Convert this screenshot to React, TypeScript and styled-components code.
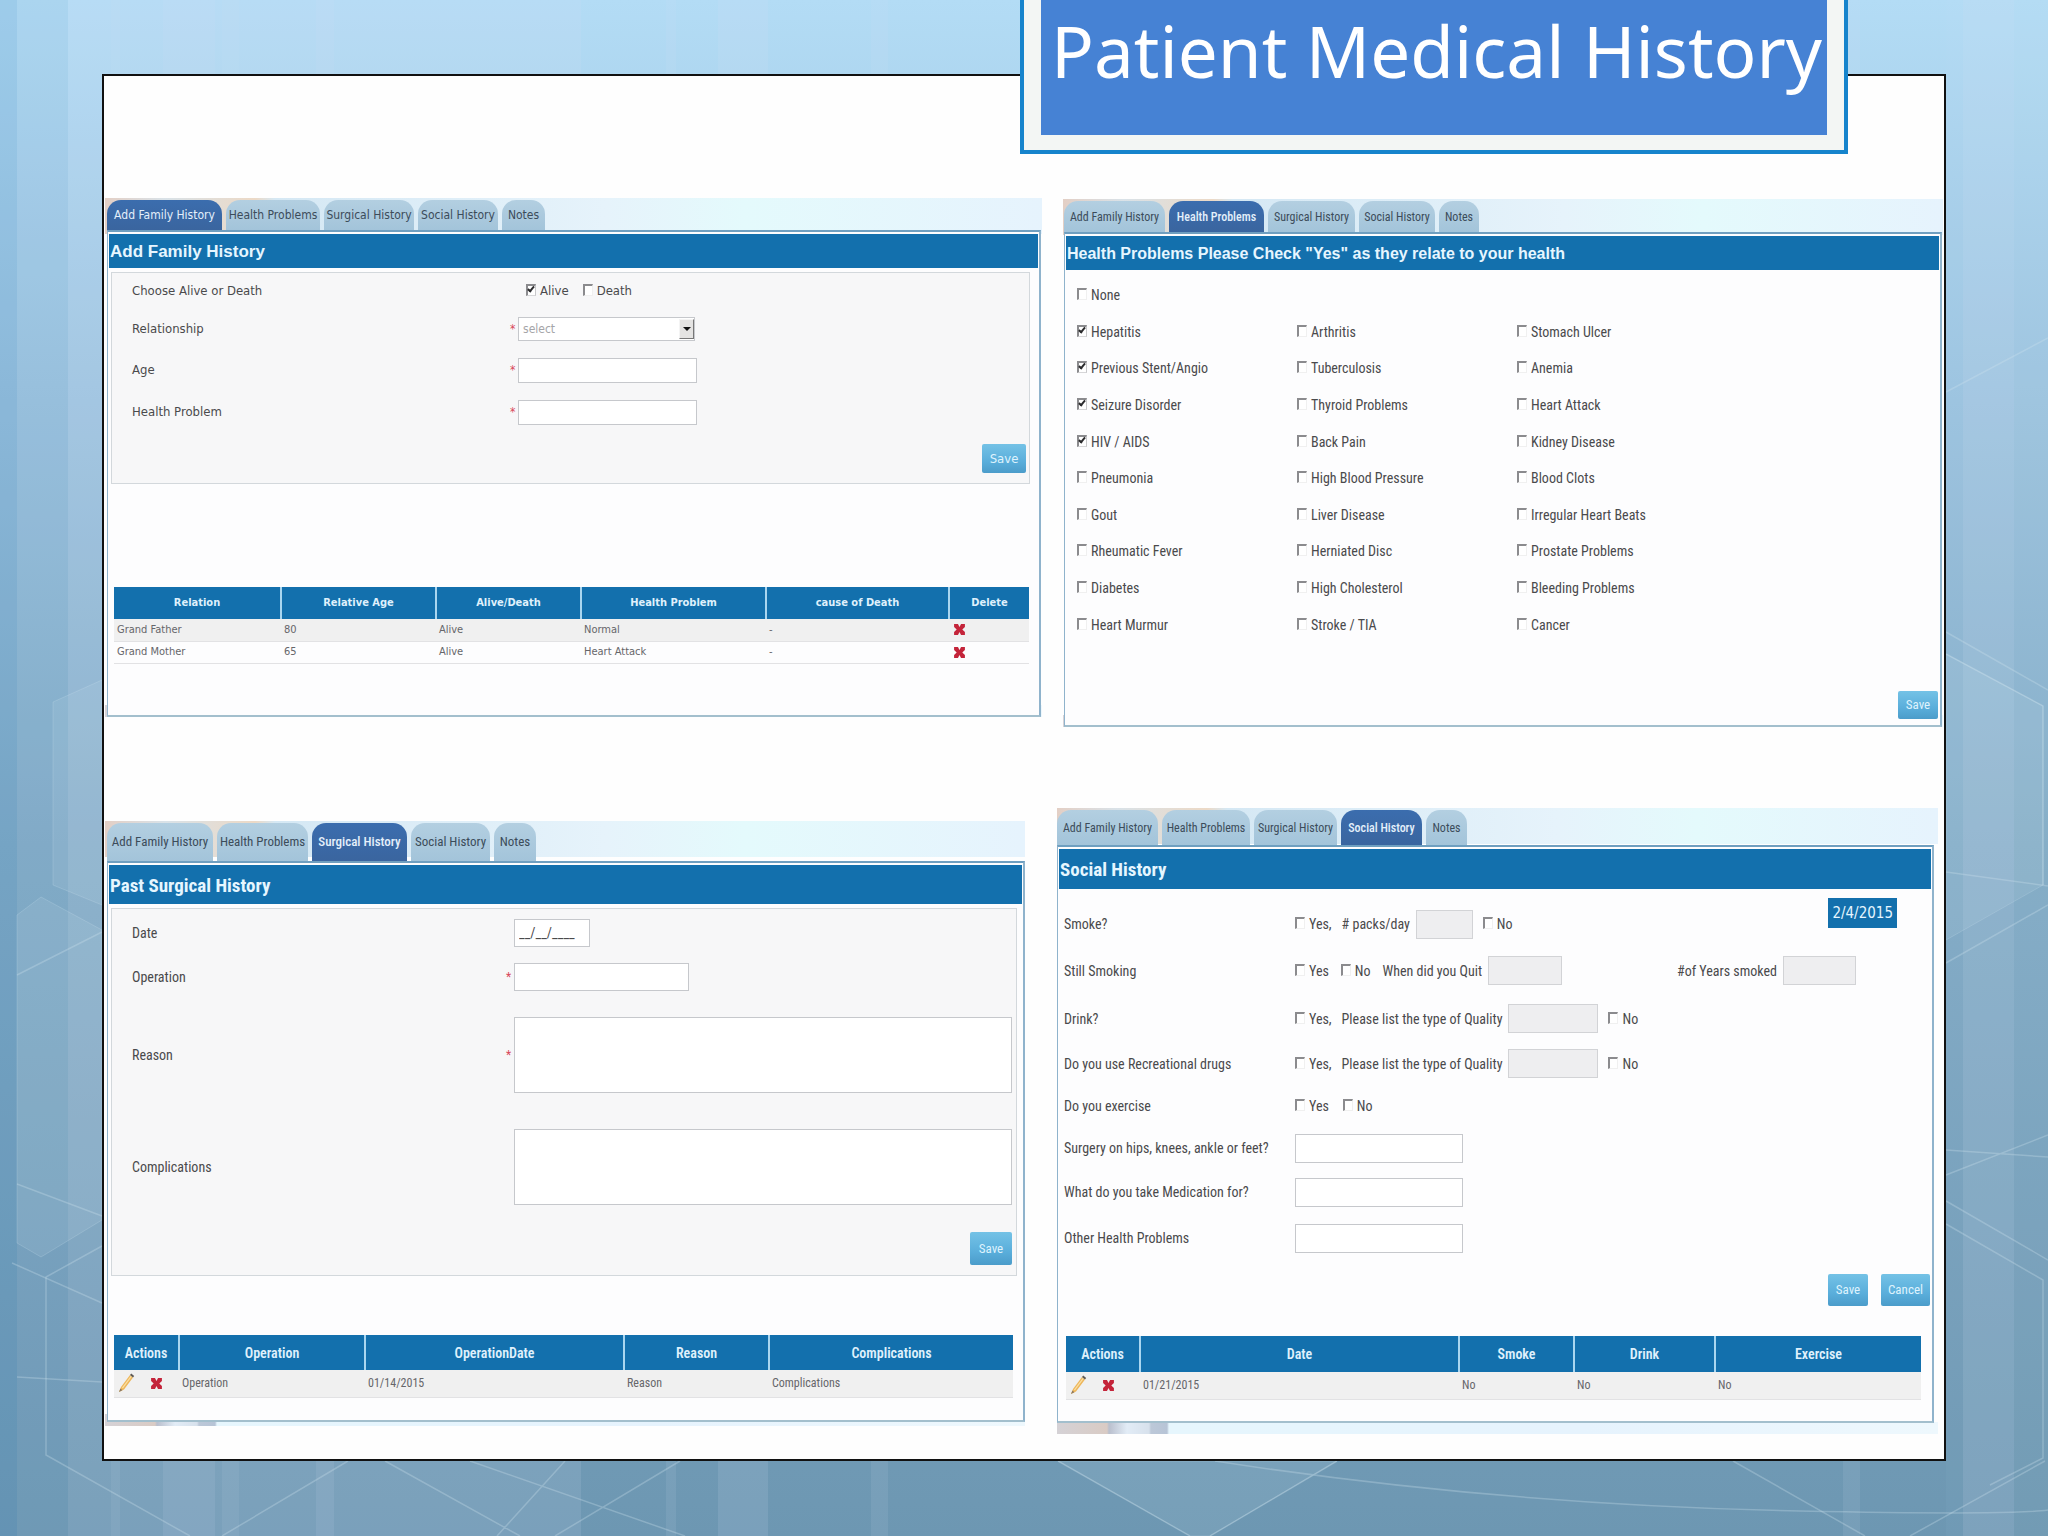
import React, { useId, useState } from "react";
import styled, { createGlobalStyle, css } from "styled-components";

const TAHOMA = '"DejaVu Sans Condensed", "Liberation Sans", sans-serif';
const NARROW = '"Roboto Condensed", "Liberation Sans", sans-serif';
const ARIAL = '"Liberation Sans", Arial, sans-serif';
const HEADING = '"Noto Sans", "Open Sans", sans-serif';

const Global = createGlobalStyle`
  *, *::before, *::after { box-sizing: border-box; }
  body { margin: 0; background: #6b95b3; }
  button, input, select, textarea { font: inherit; color: inherit; margin: 0; }
`;

/* ---------- slide ---------- */

const Slide = styled.main`
  position: relative;
  isolation: isolate;
  min-height: 100vh;
  padding: 74px 102px 75px;
  display: flex;
  flex-direction: column;
`;

const Backdrop = styled.svg`
  position: absolute;
  inset: 0;
  width: 100%;
  height: 100%;
  z-index: -1;
`;

const Sheet = styled.section`
  flex: 1;
  padding: 122px 1px 24px;
  border: 2px solid #111;
  background: #fefefe;
`;

const TitleFrame = styled.header`
  position: absolute;
  top: 0;
  right: 200px;
  padding: 0 17px 15px;
  border: 4px solid #1684cc;
  border-top: 0;
  background: #f3f6f4;
`;

const Title = styled.h1`
  margin: 0;
  padding: 0 5px 33px 10px;
  background: #4682d4;
  color: #fff;
  font: 400 71px/102px ${HEADING};
  white-space: nowrap;
`;

const PanelRow = styled.div<{ $cols: string; $gap: number; $end?: number }>`
  display: grid;
  grid-template-columns: ${(p) => p.$cols};
  column-gap: ${(p) => p.$gap}px;
  align-items: start;
  padding-right: ${(p) => p.$end || 0}px;
  & + & { margin-top: 81px; }
`;

/* ---------- panel ---------- */

const Panel = styled.article<{ $font: string; $size: number; $top?: number; $inset?: string; $foot?: number }>`
  margin-top: ${(p) => p.$top || 0}px;
  padding: ${(p) => p.$inset || "0 1px 0 2px"};
  padding-bottom: ${(p) => p.$foot || 0}px;
  font-family: ${(p) => p.$font};
  font-size: ${(p) => p.$size}px;
  line-height: 18px;
  color: #4a4a4c;
  background:
    linear-gradient(90deg, #d5d2d6 0, #d9cbc4 50px, #b9bfcd 52px, #e2ecf6 70px, #d7e1ec 92px, #bcc8d8 94px, #b7c4d6 110px, #e6f6fd 112px, #e6f3fd 60%, #eef8fd) bottom / 100% 12px no-repeat,
    linear-gradient(90deg, #e3cfc5 0, #d9e2e8 60px, #ecd9c6 150px, #d5e8f4 170px, #e6f3fb 500px, #e4fafc 640px, #e6f3fd) top / 100% 36px no-repeat;
`;

const TabBar = styled.nav<{ $cols: string; $height: number; $lead: number }>`
  display: grid;
  grid-template-columns: ${(p) => p.$cols};
  column-gap: 4px;
  height: ${(p) => p.$height}px;
  padding: 2px 0 0 ${(p) => p.$lead}px;
`;

const Tab = styled.button<{ $on: boolean; $size: number }>`
  padding: 0;
  border: 0;
  border-radius: 14px 14px 0 0;
  background: ${(p) => (p.$on ? "linear-gradient(#3b6dae, #3a659f)" : "linear-gradient(#b3cfe1, #a3c4da)")};
  color: ${(p) => (p.$on ? "#e4f0fb" : "#3c4c5a")};
  font-size: ${(p) => p.$size}px;
  font-weight: ${(p) => (p.$on ? 500 : 400)};
  white-space: nowrap;
  cursor: pointer;
`;

const Body = styled.div<{ $bottom: number }>`
  position: relative;
  padding: 2px 1px ${(p) => p.$bottom}px;
  border: 1px solid #8fb3cc;
  border-width: 2px 2px 2px 1px;
  border-top-color: #6f9fc0;
  border-bottom-color: #a3bfcd;
  background: #fdfdfe;
`;

const Band = styled.h2<{ $height: number; $font: string; $size: number }>`
  display: flex;
  align-items: center;
  height: ${(p) => p.$height}px;
  margin: 0;
  padding: 2px 0 0 1px;
  background: #1370ad;
  color: #e6f6ff;
  font: 700 ${(p) => p.$size}px/24px ${(p) => p.$font};
  white-space: nowrap;
`;

const Form = styled.form<{ $right: number; $label: number }>`
  --label: ${(p) => p.$label}px;
  margin: 4px ${(p) => p.$right}px 0 2px;
  padding-bottom: 10px;
  border: 1px solid #d3d8dc;
  background: #f7f7f8;
`;

const Field = styled.div<{ $height: number }>`
  display: grid;
  grid-template-columns: var(--label) 8px 1fr;
  align-items: center;
  min-height: ${(p) => p.$height}px;
  padding-right: 4px;
`;

const FieldLabel = styled.label`
  padding-left: 20px;
`;

const Star = styled.span`
  color: #d8475a;
  font-size: 12px;
`;

const boxed = css`
  border: 1px solid #c6c8cc;
  border-radius: 0;
  background: #fff;
  padding: 0 4px;
  outline: none;
`;

const TextBox = styled.input<{ $w: number; $h: number }>`
  ${boxed}
  width: ${(p) => p.$w}px;
  height: ${(p) => p.$h}px;
  &:disabled { background: #eeeef0; border-color: #d2d3d6; }
`;

const Area = styled.textarea`
  ${boxed}
  display: block;
  width: 100%;
  height: 76px;
  resize: none;
`;

const SelectWrap = styled.span`
  position: relative;
  display: inline-block;
  width: 177px;
`;

const Select = styled.select`
  ${boxed}
  appearance: none;
  display: block;
  width: 100%;
  height: 24px;
  color: #a5a5a8;
  font-size: 12px;
`;

const SelectArrow = styled.span`
  position: absolute;
  top: 2px;
  right: 1px;
  width: 15px;
  height: 20px;
  display: grid;
  place-items: center;
  background: #e4e3e2;
  border: 1px solid #f4f4f4;
  border-right-color: #777;
  border-bottom-color: #777;
  pointer-events: none;
  &::after {
    content: "";
    border: 4px solid transparent;
    border-bottom: 0;
    border-top-color: #111;
  }
`;

const CheckLabel = styled.label`
  display: inline-flex;
  align-items: center;
  gap: 4px;
  white-space: nowrap;
`;

const Tick = styled.input`
  appearance: none;
  position: relative;
  width: 10px;
  height: 12px;
  margin-bottom: 2px;
  border: 1px solid #f0f0f0;
  border-top: 2px solid #8b8b8e;
  border-left: 2px solid #8b8b8e;
  background: #fff;
  &:checked { border-color: #8b8b8e #c8c8ca #d6d6d8 #8b8b8e; }
  &:checked::after {
    content: "";
    position: absolute;
    left: 1px;
    top: -1px;
    width: 4px;
    height: 7px;
    border: solid #2b2b2d;
    border-width: 0 2px 2px 0;
    transform: rotate(40deg);
  }
`;

const Inline = styled.div<{ $gap?: number; $lead?: number }>`
  display: flex;
  align-items: center;
  gap: ${(p) => p.$gap ?? 14}px;
  padding-left: ${(p) => p.$lead || 0}px;
  white-space: nowrap;
`;

const Actions = styled.div<{ $top: number; $right: number; $gap?: number }>`
  display: flex;
  justify-content: flex-end;
  gap: ${(p) => p.$gap || 0}px;
  padding: ${(p) => p.$top}px ${(p) => p.$right}px 0 0;
`;

const Push = styled.button<{ $w: number; $h: number }>`
  width: ${(p) => p.$w}px;
  height: ${(p) => p.$h}px;
  padding: 0;
  border: 0;
  border-radius: 2px;
  background: linear-gradient(#74c2e6, #5aaedb 60%, #4b9cca);
  color: #dff3fd;
  font-size: 13px;
  cursor: pointer;
`;

/* ---------- tables ---------- */

const Table = styled.table<{ $left: number; $right: number; $head: number; $row: number; $size: number; $th: number }>`
  width: calc(100% - ${(p) => p.$left + p.$right}px);
  margin: 0 ${(p) => p.$right}px 0 ${(p) => p.$left}px;
  table-layout: fixed;
  border-collapse: collapse;
  th {
    height: ${(p) => p.$head}px;
    padding: 0;
    background: #1370ad;
    color: #dff0fc;
    font-size: ${(p) => p.$th}px;
    font-weight: 600;
    text-align: center;
  }
  th + th { border-left: 2px solid #a9d6f0; }
  td {
    height: ${(p) => p.$row}px;
    padding: 0 3px;
    border-bottom: 1px solid #e2e2e4;
    font-size: ${(p) => p.$size}px;
    color: #66666a;
    white-space: nowrap;
  }
  tbody tr:nth-child(odd) td { background: #f0f0f0; }
`;

const Col = styled.col<{ $w: number }>`
  width: ${(p) => p.$w}px;
`;

const Spacer = styled.div<{ $h: number }>`
  height: ${(p) => p.$h}px;
`;

const IconButton = styled.button`
  display: inline-flex;
  vertical-align: middle;
  padding: 0 0 0 1px;
  border: 0;
  background: none;
  cursor: pointer;
`;

const CrossIcon = () => (
  <svg width="13" height="13" viewBox="0 0 12 13" preserveAspectRatio="none" aria-hidden="true">
    <path d="M1 1h3.6L6 4 7.4 1H11v3L8.6 6.5 11 9v3H7.4L6 9l-1.4 3H1V9l2.4-2.5L1 4z" fill="#c4243a" />
  </svg>
);

const PencilIcon = () => (
  <svg width="17" height="20" viewBox="0 0 17 20" aria-hidden="true">
    <path d="M1 19l2-5L12 2l3 2.4L6 16.4z" fill="#edb65a" />
    <path d="M4.4 15.2L13.4 3.2" stroke="#fae0a6" strokeWidth="1.2" />
    <path d="M12 2l1.2-1.4 3 2.4L15 4.4z" fill="#5f5a55" />
    <path d="M1 19l1.4-3.4 2 1.7z" fill="#8d7a63" />
  </svg>
);

const Delete = () => <IconButton type="button" aria-label="Delete"><CrossIcon /></IconButton>;

const RowActions = () => (
  <Inline $gap={14}>
    <IconButton type="button" aria-label="Edit"><PencilIcon /></IconButton>
    <Delete />
  </Inline>
);

const Grid = ({ cols, head, rows, ...rest }: {
  cols: number[]; head: string[]; rows: React.ReactNode[][];
  $left: number; $right: number; $head: number; $row: number; $size: number; $th: number;
}) => (
  <Table {...rest}>
    <colgroup>{cols.map((w, i) => <Col key={i} $w={w} />)}</colgroup>
    <thead><tr>{head.map((h) => <th key={h} scope="col">{h}</th>)}</tr></thead>
    <tbody>{rows.map((r, i) => <tr key={i}>{r.map((c, j) => <td key={j}>{c}</td>)}</tr>)}</tbody>
  </Table>
);

const TABS = ["Add Family History", "Health Problems", "Surgical History", "Social History", "Notes"];

const Tabs = ({ on, size, ...rest }: { on: number; size: number; $cols: string; $height: number; $lead: number }) => (
  <TabBar {...rest}>
    {TABS.map((t, i) => <Tab key={t} type="button" $on={i === on} $size={size}>{t}</Tab>)}
  </TabBar>
);

const Check = ({ label, on = false }: { label: string; on?: boolean }) => {
  const [v, setV] = useState(on);
  return <CheckLabel><Tick type="checkbox" checked={v} onChange={() => setV(!v)} />{label}</CheckLabel>;
};

/* ---------- family history ---------- */

const Family = () => {
  const id = useId();
  return (
    <Panel $font={TAHOMA} $size={13}>
      <Tabs on={0} size={12} $cols="115px 94px 90px 80px 43px" $height={32} $lead={0} />
      <Body $bottom={51}>
        <Band $height={34} $font={ARIAL} $size={17}>Add Family History</Band>
        <Form $right={8} $label={398}>
          <Field $height={35}>
            <FieldLabel as="span">Choose Alive or Death</FieldLabel><span />
            <Inline $lead={8}><Check label="Alive" on /><Check label="Death" /></Inline>
          </Field>
          <Field $height={41}>
            <FieldLabel htmlFor={id + "r"}>Relationship</FieldLabel><Star>*</Star>
            <SelectWrap>
              <Select id={id + "r"} defaultValue="select"><option>select</option></Select>
              <SelectArrow />
            </SelectWrap>
          </Field>
          <Field $height={42}>
            <FieldLabel htmlFor={id + "a"}>Age</FieldLabel><Star>*</Star>
            <TextBox id={id + "a"} $w={179} $h={25} />
          </Field>
          <Field $height={42}>
            <FieldLabel htmlFor={id + "h"}>Health Problem</FieldLabel><Star>*</Star>
            <TextBox id={id + "h"} $w={179} $h={25} />
          </Field>
          <Actions $top={11} $right={3}><Push type="button" $w={44} $h={29}>Save</Push></Actions>
        </Form>
        <Spacer $h={103} />
        <Grid
          $left={5} $right={9} $head={32} $row={22} $size={11} $th={11}
          cols={[167, 155, 145, 185, 183, 80]}
          head={["Relation", "Relative Age", "Alive/Death", "Health Problem", "cause of Death", "Delete"]}
          rows={[
            ["Grand Father", "80", "Alive", "Normal", "-", <Delete />],
            ["Grand Mother", "65", "Alive", "Heart Attack", "-", <Delete />],
          ]}
        />
      </Body>
    </Panel>
  );
};

/* ---------- health problems ---------- */

const Problems = styled.div`
  display: grid;
  grid-template-columns: repeat(3, 220px);
  grid-template-rows: repeat(10, 1fr);
  align-items: center;
  height: 373px;
  padding: 7px 0 0 11px;
`;

const PROBLEMS: [string, boolean?][] = [
  ["Hepatitis", true], ["Arthritis"], ["Stomach Ulcer"],
  ["Previous Stent/Angio", true], ["Tuberculosis"], ["Anemia"],
  ["Seizure Disorder", true], ["Thyroid Problems"], ["Heart Attack"],
  ["HIV / AIDS", true], ["Back Pain"], ["Kidney Disease"],
  ["Pneumonia"], ["High Blood Pressure"], ["Blood Clots"],
  ["Gout"], ["Liver Disease"], ["Irregular Heart Beats"],
  ["Rheumatic Fever"], ["Herniated Disc"], ["Prostate Problems"],
  ["Diabetes"], ["High Cholesterol"], ["Bleeding Problems"],
  ["Heart Murmur"], ["Stroke / TIA"], ["Cancer"],
];

const FirstCell = styled.div`
  grid-column: 1 / -1;
`;

const Health = () => (
  <Panel $font={NARROW} $size={14} $top={1} $inset="0 1px 0 1px">
    <Tabs on={1} size={12} $cols="101px 95px 87px 76px 40px" $height={33} $lead={0} />
    <Body $bottom={6}>
      <Band $height={34} $font={ARIAL} $size={16}>Health Problems Please Check "Yes" as they relate to your health</Band>
      <Problems>
        <FirstCell><Check label="None" /></FirstCell>
        {PROBLEMS.map(([name, on]) => <Check key={name} label={name} on={on} />)}
      </Problems>
      <Actions $top={48} $right={1}><Push type="button" $w={40} $h={28}>Save</Push></Actions>
    </Body>
  </Panel>
);

/* ---------- surgical history ---------- */

const Surgical = () => {
  const id = useId();
  return (
    <Panel $font={NARROW} $size={14} $top={13} $inset="0 0 0 2px" $foot={4}>
      <Tabs on={2} size={13} $cols="106px 91px 95px 79px 42px" $height={40} $lead={0} />
      <Body $bottom={22}>
        <Band $height={39} $font={NARROW} $size={19}>Past Surgical History</Band>
        <Form $right={5} $label={394}>
          <Field $height={47}>
            <FieldLabel htmlFor={id + "d"}>Date</FieldLabel><span />
            <TextBox id={id + "d"} $w={76} $h={28} defaultValue="__/__/____" />
          </Field>
          <Field $height={42}>
            <FieldLabel htmlFor={id + "o"}>Operation</FieldLabel><Star>*</Star>
            <TextBox id={id + "o"} $w={175} $h={28} />
          </Field>
          <Field $height={114}>
            <FieldLabel htmlFor={id + "r"}>Reason</FieldLabel><Star>*</Star>
            <Area id={id + "r"} />
          </Field>
          <Field $height={110}>
            <FieldLabel htmlFor={id + "c"}>Complications</FieldLabel><span />
            <Area id={id + "c"} />
          </Field>
          <Actions $top={10} $right={4}><Push type="button" $w={42} $h={33}>Save</Push></Actions>
        </Form>
        <Spacer $h={59} />
        <Grid
          $left={5} $right={9} $head={35} $row={27} $size={12} $th={14}
          cols={[65, 186, 259, 145, 244]}
          head={["Actions", "Operation", "OperationDate", "Reason", "Complications"]}
          rows={[[<RowActions />, "Operation", "01/14/2015", "Reason", "Complications"]]}
        />
      </Body>
    </Panel>
  );
};

/* ---------- social history ---------- */

const DateBadge = styled.time`
  position: absolute;
  top: 51px;
  right: 35px;
  padding: 6px 4px;
  background: #1370ad;
  color: #e6f6ff;
  font: 400 15px/18px ${TAHOMA};
`;

const Questions = styled.form`
  padding: 13px 0 0 5px;
`;

const Question = styled.div<{ $height: number }>`
  display: grid;
  grid-template-columns: 231px 1fr;
  align-items: center;
  min-height: ${(p) => p.$height}px;
`;

const Beside = styled.label`
  display: inline-flex;
  align-items: center;
  gap: 6px;
`;

const Apart = styled(Beside)`
  margin-left: auto;
  padding-right: 75px;
`;

const QUALITY = "Please list the type of Quality";

const Quality = ({ label, height }: { label: string; height: number }) => (
  <Question $height={height}>
    <span>{label}</span>
    <Inline $gap={10}>
      <Check label="Yes," />
      <Beside>{QUALITY}<TextBox disabled $w={90} $h={29} /></Beside>
      <Check label="No" />
    </Inline>
  </Question>
);

const Open = ({ label, height }: { label: string; height: number }) => {
  const id = useId();
  return (
    <Question $height={height}>
      <label htmlFor={id}>{label}</label>
      <TextBox id={id} $w={168} $h={29} />
    </Question>
  );
};

const Social = () => (
  <Panel $font={NARROW} $size={14} $inset="0 4px 0 0" $foot={11}>
    <Tabs on={3} size={12} $cols="101px 88px 83px 81px 41px" $height={37} $lead={0} />
    <Body $bottom={21}>
      <Band $height={40} $font={NARROW} $size={19}>Social History</Band>
      <DateBadge>2/4/2015</DateBadge>
      <Questions>
        <Question $height={44}>
          <span>Smoke?</span>
          <Inline $gap={10}>
            <Check label="Yes," />
            <Beside># packs/day<TextBox disabled $w={57} $h={29} /></Beside>
            <Check label="No" />
          </Inline>
        </Question>
        <Question $height={49}>
          <span>Still Smoking</span>
          <Inline $gap={12}>
            <Check label="Yes" />
            <Check label="No" />
            <Beside>When did you Quit<TextBox disabled $w={74} $h={29} /></Beside>
            <Apart>#of Years smoked<TextBox disabled $w={73} $h={29} /></Apart>
          </Inline>
        </Question>
        <Quality label="Drink?" height={47} />
        <Quality label="Do you use Recreational drugs" height={43} />
        <Question $height={42}>
          <span>Do you exercise</span>
          <Inline $gap={14}><Check label="Yes" /><Check label="No" /></Inline>
        </Question>
        <Open label="Surgery on hips, knees, ankle or feet?" height={42} />
        <Open label="What do you take Medication for?" height={46} />
        <Open label="Other Health Problems" height={46} />
        <Actions $top={13} $right={1} $gap={13}>
          <Push type="button" $w={40} $h={32}>Save</Push>
          <Push type="button" $w={49} $h={32}>Cancel</Push>
        </Actions>
      </Questions>
      <Spacer $h={30} />
      <Grid
        $left={7} $right={10} $head={36} $row={27} $size={12} $th={14}
        cols={[74, 319, 115, 141, 206]}
        head={["Actions", "Date", "Smoke", "Drink", "Exercise"]}
        rows={[[<RowActions />, "01/21/2015", "No", "No", "No"]]}
      />
    </Body>
  </Panel>
);

/* ---------- backdrop ---------- */

const BANDS: [number, number, number][] = [
  [17, 51, 0.06], [68, 513, 0.13], [111, 9, 0.08], [163, 52, 0.1], [222, 17, 0.08], [316, 18, 0.1],
  [666, 10, 0.1], [718, 50, 0.13], [871, 17, 0.1], [1843, 17, 0.1], [1946, 17, 0.04], [1963, 51, 0.16], [2014, 34, 0.05],
];

const LINES = [
  "M102 932L17 975M17 1184L102 1216M12 1263L102 1303M17 1377L102 1382",
  "M102 1246L46 1277V1455L190 1536",
  "M348 1461L222 1536M385 1461L520 1536M470 1461L685 1536M565 1461L497 1536M680 1461L555 1536",
  "M1058 1461L1190 1536M1337 1461L1210 1536M1215 1461Q1500 1505 1800 1511T2048 1504",
  "M1733 1461L1865 1536M2045 1461L1910 1536",
  "M1946 392L2048 338M1946 632L2048 690M1946 872L2048 886M1946 963L2048 905",
  "M1946 1150L2048 1157M1946 1175L2048 1135M1946 1201L2048 1260M1946 1224L2043 1280V1458L1990 1485",
  "M1946 654L2043 706V885",
];

const Scene = () => (
  <Backdrop viewBox="0 0 2048 1536" preserveAspectRatio="none" aria-hidden="true">
    <defs>
      <linearGradient id="sky" x1="0" y1="0" x2="0" y2="1">
        <stop offset="0" stopColor="#b3dcf5" />
        <stop offset="0.25" stopColor="#9dc4e0" />
        <stop offset="0.55" stopColor="#82abc6" />
        <stop offset="1" stopColor="#6d97b2" />
      </linearGradient>
    </defs>
    <rect width="2048" height="1536" fill="url(#sky)" />
    {BANDS.map(([x, w, o]) => <rect key={x} x={x} width={w} height="1536" fill="#d5e2f5" opacity={o} />)}
    <rect width="17" height="1536" fill="#3f86bb" opacity="0.18" />
    <rect x="17" width="51" height="1536" fill="#3f86bb" opacity="0.08" />
    <g fill="#dbe8f5" fillOpacity="0.1" stroke="#d9ecf5" strokeOpacity="0.2">
      <path d="M102 680L53 702V885L102 905z" />
      <path d="M17 915L41 897L102 930V1220L41 1257L17 1243z" />
      <path d="M1058 1461L1190 1536H1210L1337 1461z" />
      <path d="M1946 654L2043 706V885L1946 940z" />
    </g>
    <g fill="none" stroke="#cfe5f0" strokeOpacity="0.3" strokeWidth="1.5">
      {LINES.map((d) => <path key={d} d={d} />)}
    </g>
  </Backdrop>
);

export default function App() {
  return (
    <Slide>
      <Global />
      <Scene />
      <Sheet>
        <PanelRow $cols="936fr 881fr" $gap={21}>
          <Family />
          <Health />
        </PanelRow>
        <PanelRow $cols="919fr 881fr" $gap={32} $end={9}>
          <Surgical />
          <Social />
        </PanelRow>
      </Sheet>
      <TitleFrame><Title>Patient Medical History</Title></TitleFrame>
    </Slide>
  );
}
